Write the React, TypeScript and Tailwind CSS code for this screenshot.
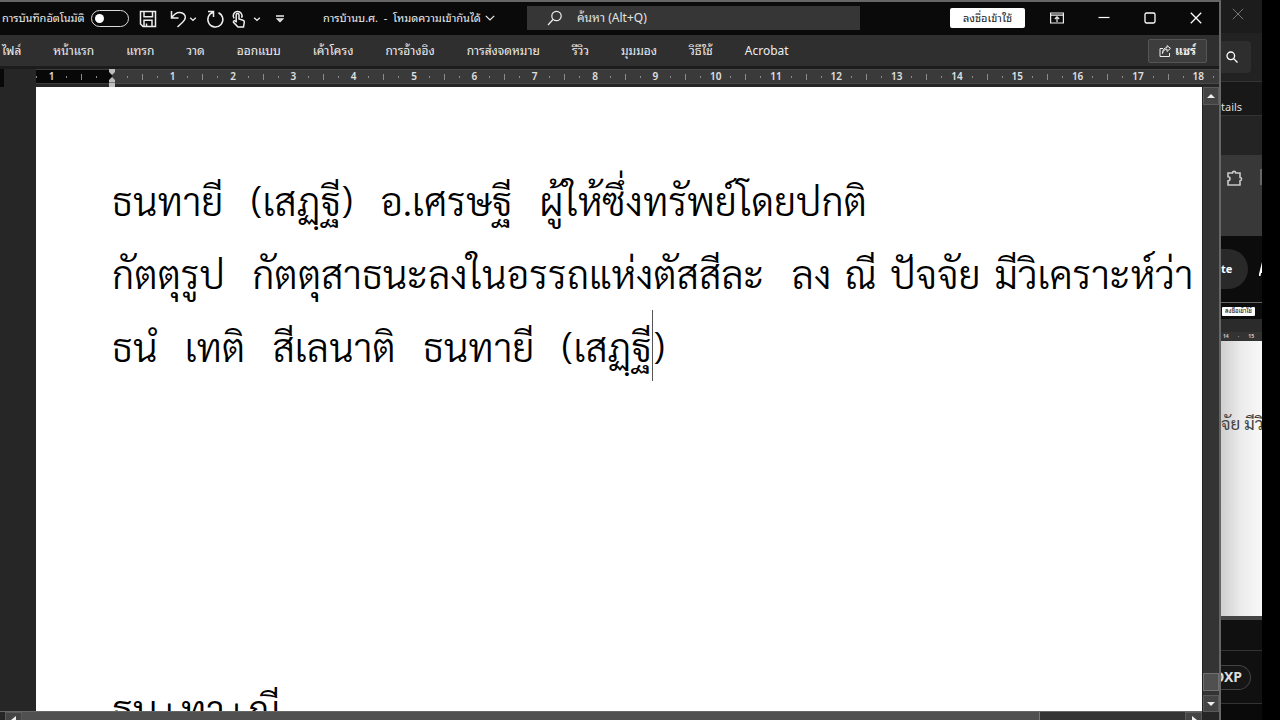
import type { ReactNode } from 'react';

const tabs = ['ไฟล์', 'หน้าแรก', 'แทรก', 'วาด', 'ออกแบบ', 'เค้าโครง', 'การอ้างอิง', 'การส่งจดหมาย', 'รีวิว', 'มุมมอง', 'วิธีใช้', 'Acrobat'];

const rulerUnits = Array.from({ length: 18 }, (_, i) => i + 1);

function Icon({ size = 'size-5', children }: { size?: string; children: ReactNode }) {
  return (
    <svg viewBox="0 0 20 20" className={`${size} block shrink-0 fill-none stroke-current`} strokeWidth="1.5" aria-hidden="true">
      {children}
    </svg>
  );
}

function Chevron() {
  return (
    <svg viewBox="0 0 8 8" className="size-2 shrink-0 fill-none stroke-current" strokeWidth="1.4" aria-hidden="true">
      <path d="M1.2 2.8 4 5.4 6.8 2.8" />
    </svg>
  );
}

function Dot() {
  return <span className="flex flex-1 justify-center"><span className="h-0.5 w-px bg-[#8a8a8a]" /></span>;
}

function Tick() {
  return <span className="flex flex-1 justify-center"><span className="h-1.5 w-px bg-[#8a8a8a]" /></span>;
}

function RulerNumber({ children }: { children: ReactNode }) {
  return <span className="flex w-0 flex-1 justify-center">{children}</span>;
}

function TitleBar() {
  return (
    <header className="flex h-[33px] shrink-0 items-center bg-[#0a0a0a] pb-px text-[11px] text-[#ededed]">
      <label className="flex items-center gap-1.5 pl-0.5">
        <span className="w-[83px] whitespace-nowrap">การบันทึกอัตโนมัติ</span>
        <input type="checkbox" className="peer sr-only" />
        <span className="flex h-[17px] w-[38px] items-center rounded-full border border-[#dcdcdc] px-[3px]">
          <span className="size-[9px] rounded-full bg-white" />
        </span>
      </label>
      <div className="ml-[9px] flex items-center pt-0.5">
        <button aria-label="บันทึก" className="mr-2.5">
          <Icon><path d="M2.5 2.5h15v15H5L2.5 15zM6 2.8v5h8.500v-5M6 17.200v-6h8v6M8.500 17v-2.500" /></Icon>
        </button>
        <button aria-label="เลิกทำ" className="mr-px">
          <Icon><path d="M3.500 2v7H10.500M3.800 8.700C6 5 9 3.200 12 3.400c3.300.2 5.500 2.600 5.300 5.200-.1 2-1.300 3.300-2.700 4.600L9.500 18" /></Icon>
        </button>
        <button aria-label="ตัวเลือกเลิกทำ" className="mr-2"><Chevron /></button>
        <button aria-label="ทำซ้ำ" className="mr-1">
          <Icon><path d="M3 2.500h5.500v5.500M8.300 3.300A7.500 7.500 0 1 0 13.500 3.700" /></Icon>
        </button>
        <button aria-label="โหมดสัมผัส" className="mr-1">
          <Icon><path d="M5 9.300a4.400 4.400 0 1 1 7.600-.6M7.200 12.500V5.800a1.400 1.400 0 0 1 2.800 0V10l4 1.200c1 .3 1.500 1 1.300 2L14.500 18H9L4.500 13.300c-.5-1.400 1-2 1.800-1.300l1.500 1.300" /></Icon>
        </button>
        <button aria-label="ตัวเลือกโหมดสัมผัส" className="mr-[15px]"><Chevron /></button>
        <button aria-label="กำหนดแถบเครื่องมือด่วนเอง">
          <svg viewBox="0 0 8 8" className="size-2 fill-none stroke-current" strokeWidth="1.3" aria-hidden="true">
            <path d="M0 1h8M1.500 4h5L4 6.500z" />
          </svg>
        </button>
      </div>
      <button className="ml-[39px] flex w-[177px] items-center gap-1 whitespace-pre">
        <span>การบ้านบ.ศ.  -  โหมดความเข้ากันได้</span>
        <svg viewBox="0 0 10 10" className="size-2.5 shrink-0 fill-none stroke-current" strokeWidth="1.2" aria-hidden="true"><path d="M.8 2.800 5 7l4.200-4.200" /></svg>
      </button>
      <label className="ml-[27px] flex h-6 w-[333px] items-center bg-[#363636] pl-5">
        <svg viewBox="0 0 16 16" className="size-4 shrink-0 fill-none stroke-current" strokeWidth="1.200" aria-hidden="true">
          <circle cx="9.500" cy="6" r="4.700" /><path d="M6 9.500 1 15" />
        </svg>
        <input type="search" aria-label="ค้นหา" placeholder="ค้นหา (Alt+Q)" className="ml-3.5 min-w-0 flex-1 bg-transparent text-xs outline-none placeholder:text-[#e4e4e4]" />
      </label>
      <div className="ml-auto flex items-center">
        <button className="mr-[25px] h-5 w-[75px] rounded-xs bg-white text-center whitespace-nowrap text-[#222]">ลงชื่อเข้าใช้</button>
        <button aria-label="ตัวเลือกการแสดง Ribbon" className="mr-[34px]">
          <svg viewBox="0 0 14 12" className="h-3 w-3.5 fill-none stroke-current" strokeWidth="1.200" aria-hidden="true">
            <path d="M.6 1h12.800v10H.6zM.6 3.200h12.800M7 10V5M4.800 7 7 4.900 9.200 7" />
          </svg>
        </button>
        <button aria-label="ย่อเล็กสุด" className="mr-[34px] text-white">
          <svg viewBox="0 0 12 12" className="size-3 fill-none stroke-current" strokeWidth="1.200" aria-hidden="true"><path d="M.5 5.500h11" /></svg>
        </button>
        <button aria-label="ขยายใหญ่สุด" className="mr-[34px] text-white">
          <svg viewBox="0 0 12 12" className="size-3 fill-none stroke-current" strokeWidth="1.300" aria-hidden="true"><rect x="1" y="1" width="10" height="10" rx="1.500" /></svg>
        </button>
        <button aria-label="ปิด" className="mr-[17px] text-white">
          <svg viewBox="0 0 12 12" className="size-3 fill-none stroke-current" strokeWidth="1.300" aria-hidden="true"><path d="M.8.8l10.400 10.400M11.200.8.8 11.200" /></svg>
        </button>
      </div>
    </header>
  );
}

function Ribbon() {
  return (
    <nav className="flex h-[31px] shrink-0 items-center justify-between bg-[#2f2f2f] pr-3 text-[#ededed]">
      <div className="flex gap-8 pl-0.5 text-xs">
        {tabs.map((t) => <button key={t} className="whitespace-nowrap">{t}</button>)}
      </div>
      <button className="flex h-6 w-[59px] items-center justify-center gap-1 rounded-xs border border-[#555] bg-[#3d3d3d] text-xs font-bold">
        <svg viewBox="0 0 12 12" className="size-3 fill-none stroke-current" strokeWidth="1" aria-hidden="true">
          <path d="M4 3.500H1v8h9.500V8M3.500 8.500C4 5.500 5.500 4.200 8 4.200V6.500L11.500 3.300 8 .6v2C5 2.800 3.500 5 3.500 8.500z" />
        </svg>
        แชร์
      </button>
    </nav>
  );
}

function Ruler() {
  return (
    <div className="flex h-[21px] shrink-0 overflow-hidden border-t-[3px] border-[#1c1c1c] bg-[#262626] text-[10px] font-semibold text-[#e0e0e0]">
      <span className="mr-8 w-1 shrink-0 bg-[#080808]" />
      <div className="flex h-[15px] w-[76px] shrink-0 items-center border-y border-[#3c3c3c] bg-[#080808]">
        <span className="h-0.5 w-px bg-[#8a8a8a]" />
        <div className="ml-[7px] flex w-[60px] items-center">
          <RulerNumber>1</RulerNumber><Dot /><Tick /><Dot />
        </div>
      </div>
      <div className="relative flex h-[15px] flex-1 items-center border-y border-[#484848] bg-[#3a3a3a]">
        <svg viewBox="0 0 8 19" className="absolute -top-0.5 -left-1 h-[19px] w-2 fill-[#bdbdbd]" aria-hidden="true">
          <path d="M1 1h6v3L4 7 1 4zM4 9l3 3v7H1v-7z" /><path d="M1 14.500h6" stroke="#777" />
        </svg>
        <div className="flex w-[23px] shrink-0 pl-2"><Dot /></div>
        <div className="flex w-[1086px] shrink-0">
          {rulerUnits.map((n) => (
            <div key={n} className="flex flex-1 items-center"><Tick /><Dot /><RulerNumber>{n}</RulerNumber><Dot /></div>
          ))}
        </div>
      </div>
    </div>
  );
}

const arrow = 'flex shrink-0 items-center justify-center border border-[#5a5a5a] bg-[#444] text-[#eee]';

function Words({ text }: { text: string }) {
  return text.split(' ').map((word, i) => <span key={i}>{`${word} `}</span>);
}

function Editor() {
  return (
    <div className="flex min-h-0 flex-1">
      <main className="flex min-w-0 flex-1 flex-col">
        <div className="flex min-h-0 flex-1 bg-[#262626] pl-9">
          <article className="flex min-w-0 flex-1 flex-col overflow-hidden bg-white pt-[76px] pl-[76px] font-['Sarabun','TH_Sarabun_New','Noto_Sans',sans-serif] text-[39px] leading-[73px] font-light whitespace-pre text-black">
            <p className="flex gap-1"><Words text="ธนทายี  (เสฏฺฐี)  อ.เศรษฐี  ผู้ให้ซึ่งทรัพย์โดยปกติ" /></p>
            <p className="flex gap-1"><Words text="กัตตุรูป  กัตตุสาธนะลงในอรรถแห่งตัสสีละ  ลง ณี ปัจจัย มีวิเคราะห์ว่า" /></p>
            <p className="mb-[289px] flex items-center gap-1">
              <Words text="ธนํ  เทติ  สีเลนาติ  ธนทายี " />
              <span className="flex items-center">(เสฏฺฐี<span className="h-[71px] w-px bg-[#555]" />)</span>
            </p>
            <p>ธน+ทา+ณี</p>
          </article>
        </div>
        <div className="flex h-[9px] shrink-0 overflow-hidden border-t border-[#666] bg-[#262626] pl-[5px]">
          <button aria-label="เลื่อนซ้าย" className={`${arrow} h-4 w-[17px]`}>
            <svg viewBox="0 0 8 8" className="size-2 fill-current" aria-hidden="true"><path d="M6 0v8L1 4z" /></svg>
          </button>
          <div className="flex h-4 flex-1"><div className="h-4 w-[87.5%] border-r border-[#777] bg-[#505050]" /><div className="flex-1 bg-[#343434]" /></div>
          <button aria-label="เลื่อนขวา" className={`${arrow} h-4 w-[17px]`}>
            <svg viewBox="0 0 8 8" className="size-2 fill-current" aria-hidden="true"><path d="M2 0v8l5-4z" /></svg>
          </button>
        </div>
      </main>
      <div className="flex w-[17px] shrink-0 flex-col border-l border-[#222] bg-[#343434]">
        <button aria-label="เลื่อนขึ้น" className={`${arrow} h-[18px]`}>
          <svg viewBox="0 0 8 8" className="size-2 fill-current" aria-hidden="true"><path d="M0 6h8L4 2z" /></svg>
        </button>
        <div className="flex-1" />
        <div className="h-[18px] border border-[#707070] bg-[#505050]" />
        <div className="h-1" />
        <button aria-label="เลื่อนลง" className={`${arrow} h-[17px]`}>
          <svg viewBox="0 0 8 8" className="size-2 fill-current" aria-hidden="true"><path d="M0 2h8L4 6z" /></svg>
        </button>
        <div className="h-2 bg-[#262626]" />
      </div>
    </div>
  );
}

function BackgroundWindow() {
  return (
    <aside className="flex w-[41px] shrink-0 flex-col overflow-hidden bg-[#101010] text-white">
      <div className="flex h-[33px] shrink-0 justify-end bg-[#1c1c1c] pt-2 pr-[18px]">
        <button aria-label="ปิดหน้าต่าง" className="h-3 text-[#777]">
          <svg viewBox="0 0 12 12" className="size-3 fill-none stroke-current" aria-hidden="true"><path d="M.8.8l10.400 10.400M11.200.8.8 11.200" /></svg>
        </button>
      </div>
      <div className="flex h-[49px] shrink-0 items-start border-b border-[#333] bg-[#222] pt-2">
        <button aria-label="ค้นหาหน้าต่าง" className="flex h-8 w-[30px] items-center rounded-r-sm bg-[#2e2e2e] pl-[5px]">
          <svg viewBox="0 0 12 12" className="size-3 fill-none stroke-current" strokeWidth="1.300" aria-hidden="true"><circle cx="4.800" cy="4.800" r="3.800" /><path d="m7.600 7.600 3.900 3.900" /></svg>
        </button>
      </div>
      <div className="flex h-[33px] shrink-0 items-end bg-[#181818] text-[11px] text-[#ddd]">tails</div>
      <div className="h-10 shrink-0 border-t border-[#333] bg-[#242424]" />
      <div className="flex h-[81px] shrink-0 items-start justify-between bg-[#383838] pt-3.5 pl-[5px]">
        <svg viewBox="0 0 18 18" className="size-[18px] fill-none stroke-[#c9c9c9]" strokeWidth="1.600" aria-hidden="true">
          <path d="M2 4h4.500a1.600 1.600 0 0 1 3.200 0H14v4.500a1.600 1.600 0 0 1 0 3.200V16H2v-4.200a2 2 0 0 0 0-4z" />
        </svg>
        <span className="h-4 w-0.5 bg-[#666]" />
      </div>
      <div className="flex h-[66px] shrink-0 items-center justify-between bg-[#0c0c0c]">
        <span className="flex h-10 w-[27px] items-center rounded-r-full bg-[#292929] text-[11px] font-bold">te</span>
        <svg viewBox="0 0 3 14" className="h-3.5 w-[3px] fill-white" aria-hidden="true"><path d="M3 0 0 12v2h1.500l.5-3h1z" /></svg>
      </div>
      <div className="flex h-[17px] shrink-0 items-center border-t border-[#666] bg-[#0c0c0c] pl-px">
        <span className="h-[9px] w-[33px] rounded-[1px] bg-white text-center text-[6px] leading-[9px] whitespace-nowrap text-black">ลงชื่อเข้าใช้</span>
      </div>
      <div className="h-[13px] shrink-0 bg-[#2b2b2b]" />
      <div className="flex h-[9px] shrink-0 items-center justify-between bg-[#333] pr-2 pl-0.5 text-[5px] leading-[9px] font-bold text-[#ccc]"><span>14</span><span>·</span><span>15</span></div>
      <div className="h-[275px] shrink-0 overflow-hidden bg-linear-to-r from-[#cfcfcf] via-[#ececec] to-[#f8f8f8] pt-[66px] font-['Sarabun','TH_Sarabun_New','Noto_Sans',sans-serif] text-[17px] leading-[32px] whitespace-nowrap text-[#444]">จัย มีวิ</div>
      <div className="h-1 shrink-0 bg-[#444]" />
      <div className="h-[31px] shrink-0 border-b border-[#333]" />
      <div className="flex h-[53px] shrink-0 items-center border-b border-[#333]">
        <span className="flex h-[25px] w-[30px] items-center justify-end rounded-r-full border border-l-0 border-[#444] bg-[#161616] pr-2 text-sm font-bold text-[#ddd]">OXP</span>
      </div>
      <div className="flex-1 bg-[#0a0a0a]" />
    </aside>
  );
}

export default function App() {
  return (
    <div className="flex h-screen overflow-hidden bg-black pr-[18px] font-['Noto_Sans','Noto_Sans_Thai_Looped',sans-serif]">
      <div className="flex min-w-0 flex-1 flex-col border-t-2 border-r-2 border-[#666]">
        <TitleBar />
        <Ribbon />
        <Ruler />
        <Editor />
      </div>
      <BackgroundWindow />
    </div>
  );
}
